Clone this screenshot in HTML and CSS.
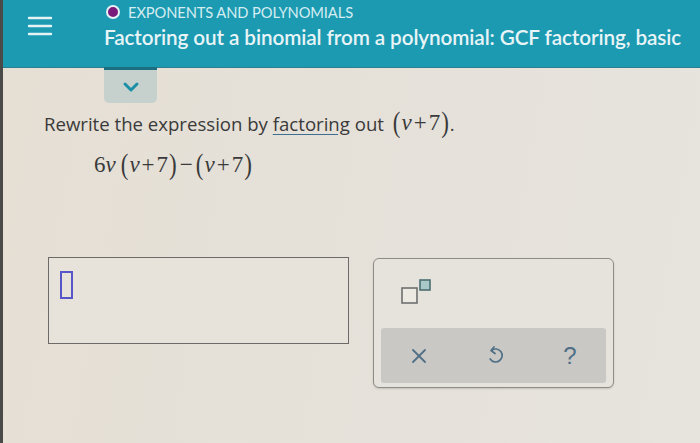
FILE: index.html
```html
<!DOCTYPE html>
<html lang="en">
<head>
<meta charset="utf-8">
<title>Factoring out a binomial</title>
<link rel="stylesheet" href="styles.css">
</head>
<body>
<header class="topbar">
  <div class="menu">
    <svg width="26" height="22" viewBox="0 0 26 22"><g stroke="#e6f3f5" stroke-width="2.4" stroke-linecap="round"><line x1="2" y1="3" x2="24" y2="3"/><line x1="2" y1="11" x2="24" y2="11"/><line x1="2" y1="19" x2="24" y2="19"/></g></svg>
  </div>
  <div class="titles">
    <div class="topic"><span class="dot"></span>EXPONENTS AND POLYNOMIALS</div>
    <div class="title">Factoring out a binomial from a polynomial: GCF factoring, basic</div>
  </div>
</header>
<div class="tabrow">
  <div class="tab">
    <svg width="18" height="12" viewBox="0 0 18 12"><polyline points="3,3 9,9 15,3" fill="none" stroke="#1b8fa6" stroke-width="3" stroke-linecap="round" stroke-linejoin="round"/></svg>
  </div>
</div>
<main class="content">
  <p class="prompt">Rewrite the expression by <span class="link">factoring</span> out <span class="math big"><span class="paren">(</span><i>v</i><span class="op">+</span>7<span class="paren">)</span></span>.</p>
  <p class="expr math">6<i>v</i><span class="paren gap">(</span><i>v</i><span class="op">+</span>7<span class="paren">)</span><span class="op">&minus;</span><span class="paren">(</span><i>v</i><span class="op">+</span>7<span class="paren">)</span></p>
  <div class="work">
    <div class="answer"><span class="cursor"></span></div>
    <div class="pad">
      <div class="padtop">
        <svg width="32" height="28" viewBox="0 0 32 28"><rect x="1" y="10" width="15" height="15" fill="#ece9e3" stroke="#6f6f6f" stroke-width="1.6"/><rect x="19" y="2" width="10" height="10" fill="#a9c8c8" stroke="#4c6e72" stroke-width="1.6"/></svg>
      </div>
      <div class="keys">
        <svg width="18" height="18" viewBox="0 0 18 18"><g stroke="#4f6f86" stroke-width="1.8" stroke-linecap="round"><line x1="3" y1="3" x2="15" y2="15"/><line x1="15" y1="3" x2="3" y2="15"/></g></svg>
        <svg width="18" height="22" viewBox="0 0 18 22"><path d="M7 2 L4 5.5 L8 8.5 M4.5 5.5 A6.5 6.5 0 1 1 3.2 14" fill="none" stroke="#4f6f86" stroke-width="1.7" stroke-linecap="round" stroke-linejoin="round"/></svg>
        <span class="q">?</span>
      </div>
    </div>
  </div>
</main>
</body>
</html>
```
FILE: styles.css
```css
html, body {
  margin: 0;
  padding: 0;
}
body {
  width: 700px;
  height: 443px;
  overflow: hidden;
  background: linear-gradient(100deg, #e6dfd4 0%, #e5e1d9 45%, #e7e4de 100%);
  font-family: "Open Sans", "Liberation Sans", sans-serif;
  color: #3b3b3b;
  border-left: 3px solid #4a4a48;
  box-sizing: border-box;
}
.topbar {
  height: 67px;
  background: #1b9ab2;
  display: flex;
  align-items: flex-start;
  box-shadow: 0 1px 0 #2d7f8f;
}
.menu {
  width: 101px;
  padding: 15px 0 0 24px;
  box-sizing: border-box;
}
.titles {
  padding-top: 2px;
}
.topic {
  display: flex;
  align-items: center;
  font-family: "Lato", "Liberation Sans", sans-serif;
  font-size: 14.7px;
  color: #d5edf1;
  height: 20px;
  letter-spacing: -0.1px;
}
.dot {
  width: 10px;
  height: 10px;
  border-radius: 50%;
  background: #7a1a7a;
  border: 2px solid #e8f2f4;
  margin: 0 8px 0 2px;
}
.title {
  font-family: "Lato", "Liberation Sans", sans-serif;
  font-size: 20.7px;
  font-weight: 600;
  color: #e8f4f6;
  margin-top: 3px;
  letter-spacing: -0.1px;
}
.tabrow {
  padding-left: 101px;
}
.tab {
  width: 53px;
  height: 33px;
  background: #c6d1cd;
  border-top: 3px solid #1b6f80;
  border-radius: 0 0 5px 5px;
  display: flex;
  align-items: center;
  justify-content: center;
}
.content {
  padding: 0 0 0 41px;
}
.prompt {
  margin: 7px 0 0;
  font-size: 18.6px;
  color: #3a3a3a;
  display: flex;
  align-items: center;
  white-space: pre;
}
.link {
  color: #3a3a3a;
  text-decoration: underline;
  text-decoration-color: #3d6f93;
  text-underline-offset: 3px;
}
.math {
  font-family: "Liberation Serif", "DejaVu Serif", serif;
}
.math i {
  font-style: italic;
}
.big {
  font-size: 23px;
  margin-left: 3px;
}
.op {
  padding: 0 2px;
}
.paren {
  display: inline-block;
  transform: scaleY(1.25);
  padding: 0 1px;
}
.gap {
  margin-left: 4px;
}
.expr {
  margin: 16px 0 0 50px;
  font-size: 23px;
  color: #3a3a3a;
  word-spacing: 0;
}
.work {
  display: flex;
  align-items: flex-start;
  margin-top: 79px;
  gap: 24px;
}
.answer {
  margin-left: 4px;
  width: 301px;
  height: 87px;
  border: 1px solid #6d6b68;
  background: #e7e3db;
  padding: 13px 0 0 11px;
  box-sizing: border-box;
}
.cursor {
  display: block;
  width: 9px;
  height: 24px;
  border: 2px solid #5755c8;
}
.pad {
  margin-top: 1px;
  width: 241px;
  height: 130px;
  border: 1.5px solid #8e8c88;
  border-radius: 6px;
  background: #e6e3dd;
  padding: 19px 7px 5px 7px;
  box-sizing: border-box;
  box-shadow: 0 1px 2px rgba(0,0,0,0.15);
}
.padtop {
  padding-left: 20px;
  height: 50px;
}
.keys {
  height: 55px;
  background: #c9c8c5;
  border-radius: 3px;
  display: flex;
  align-items: center;
  justify-content: space-around;
}
.q {
  font-family: "Liberation Sans", sans-serif;
  font-size: 24px;
  color: #4f6f86;
}
```
